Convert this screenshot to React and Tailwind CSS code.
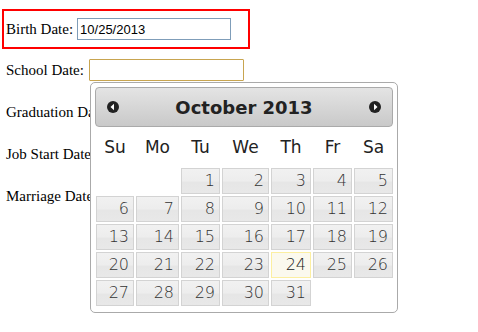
import React from 'react';

const serif = { fontFamily: '"Liberation Serif", "Times New Roman", serif' };
const sans = { fontFamily: '"DejaVu Sans", Verdana, sans-serif' };

const dayNames = ['Su', 'Mo', 'Tu', 'We', 'Th', 'Fr', 'Sa'];
const cols = 'grid grid-cols-[38px_43px_39px_47px_40px_39px_39px] gap-x-[2px]';

const NavIcon = ({ dir }) => (
  <svg width="12" height="12" viewBox="0 0 12 12">
    <circle cx="6" cy="6" r="6" fill="#222" />
    {dir === 'prev' ? (
      <polygon points="3.5,6 7,2.8 7,9.2" fill="#fff" />
    ) : (
      <polygon points="8.5,6 5,2.8 5,9.2" fill="#fff" />
    )}
  </svg>
);

const FieldRow = ({ label }) => (
  <div className="h-[42px] flex items-center pl-[4px]">
    <span className="text-[15px] text-black">{label}</span>
    <input
      type="text"
      readOnly
      className="ml-[5px] w-[154px] h-[22px] border border-[#7f9db9] bg-white outline-none"
    />
  </div>
);

const Calendar = () => {
  // October 2013 starts on a Tuesday
  const cells = [null, null, ...Array.from({ length: 31 }, (_, i) => i + 1)];

  return (
    <div
      className="absolute left-[90px] top-[82px] w-[308px] bg-white border border-[#aaaaaa] rounded-[5px] p-[4px] pb-[6px]"
      style={sans}
    >
      {/* Header */}
      <div className="h-[40px] rounded-[4px] border border-[#aaaaaa] bg-gradient-to-b from-[#e4e4e4] to-[#c9c9c9] flex items-center px-[11px]">
        <NavIcon dir="prev" />
        <div className="flex-1 text-center text-[18px] font-bold text-[#222222]">October 2013</div>
        <NavIcon dir="next" />
      </div>

      {/* Day names */}
      <div className={`${cols} ml-[1px] h-[41px] items-center`}>
        {dayNames.map((d) => (
          <div key={d} className="text-center text-[17px] text-[#222222]">{d}</div>
        ))}
      </div>

      {/* Days */}
      <div className={`${cols} gap-y-[2px] ml-[1px]`}>
        {cells.map((day, i) =>
          day === null ? (
            <div key={`e${i}`} />
          ) : (
            <div
              key={day}
              className={`h-[26px] border text-right pr-[4px] text-[16px] leading-[24px] font-extralight ${
                day === 24
                  ? 'border-[#fcefa1] bg-[#fbf9ee] text-[#1a1a1a]'
                  : 'border-[#d3d3d3] bg-[linear-gradient(#f1f1f1_0%,#ededed_50%,#e6e6e6_55%,#e8e8e8_100%)] text-[#333333]'
              }`}
            >
              {day}
            </div>
          )
        )}
      </div>
    </div>
  );
};

export default function App() {
  return (
    <div className="relative w-[478px] h-[332px] bg-white overflow-hidden" style={serif}>
      <div className="pt-[9px] pl-[2px]">
        <div className="w-[248px] h-[40px] border-2 border-[#ff0000] flex items-center pl-[2px]">
          <span className="text-[15px] text-black">Birth Date:</span>
          <input
            type="text"
            readOnly
            value="10/25/2013"
            className="ml-[4px] w-[154px] h-[22px] border border-[#7f9db9] bg-white pl-[2px] text-[13px] text-black outline-none"
            style={{ fontFamily: '"Liberation Sans", Arial, sans-serif' }}
          />
        </div>
        <div className="h-[42px] flex items-center pl-[4px]">
          <span className="text-[15px] text-black">School Date:</span>
          <input
            type="text"
            readOnly
            className="ml-[5px] w-[155px] h-[22px] border border-[#c8a550] rounded-[1px] bg-white outline-none"
          />
        </div>
        <FieldRow label="Graduation Date:" />
        <FieldRow label="Job Start Date:" />
        <FieldRow label="Marriage Date:" />
      </div>
      <Calendar />
    </div>
  );
}
